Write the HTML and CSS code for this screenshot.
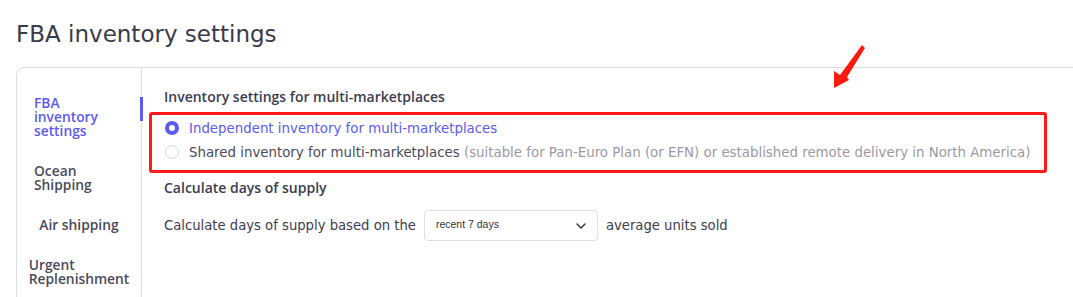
FILE: index.html
```html
<!DOCTYPE html>
<html>
<head>
<meta charset="utf-8">
<link rel="stylesheet" href="styles.css">
</head>
<body>
<h1 class="page-title">FBA inventory settings</h1>
<div class="card">
  <nav class="sidebar">
    <div class="nav-item active"><span>FBA inventory settings</span></div>
    <div class="nav-item"><span>Ocean Shipping</span></div>
    <div class="nav-item"><span>Air shipping</span></div>
    <div class="nav-item"><span>Urgent Replenishment</span></div>
  </nav>
  <main class="content">
    <h2 class="section-title">Inventory settings for multi-marketplaces</h2>
    <div class="radio-group">
      <label class="radio checked"><span class="radio-dot"></span><span class="radio-label">Independent inventory for multi-marketplaces</span></label>
      <label class="radio"><span class="radio-dot"></span><span class="radio-label">Shared inventory for multi-marketplaces <span class="muted">(suitable for Pan-Euro Plan (or EFN) or established remote delivery in North America)</span></span></label>
    </div>
    <h2 class="section-title second">Calculate days of supply</h2>
    <div class="supply-row">
      <span>Calculate days of supply based on the</span>
      <div class="select">
        <span class="select-value">recent 7 days</span>
        <svg class="chevron" width="10" height="6" viewBox="0 0 10 6"><path d="M1 1l4 4 4-4" fill="none" stroke="#333" stroke-width="1.4" stroke-linecap="round" stroke-linejoin="round"/></svg>
      </div>
      <span>average units sold</span>
    </div>
  </main>
</div>
<svg class="arrow" width="40" height="50" viewBox="830 42 40 50"><polygon points="862,45 865,48 847,77 849,80 834,88 834,71 840,75" fill="#ff1a10"/></svg>
</body>
</html>
```
FILE: styles.css
```css
html, body {
  margin: 0;
  padding: 0;
  background: #fff;
  overflow: hidden;
}
body {
  width: 1073px;
  height: 297px;
  font-family: "DejaVu Sans", "Liberation Sans", sans-serif;
  color: #3c3c4e;
  position: relative;
}
.page-title {
  margin: 0;
  padding: 19px 0 0 16px;
  height: 48px;
  box-sizing: border-box;
  font-size: 23px;
  font-weight: 400;
  line-height: 30px;
  color: #3a3a4c;
}
.card {
  margin: 19px 0 0 16px;
  width: 1080px;
  height: 240px;
  border: 1px solid #dcdce2;
  border-radius: 8px 0 0 0;
  display: flex;
  box-sizing: border-box;
}
.sidebar {
  width: 124px;
  flex: none;
  border-right: 1px solid #dcdce2;
  display: flex;
  flex-direction: column;
  padding-top: 28px;
}
.nav-item {
  position: relative;
  display: flex;
  justify-content: center;
  padding: 0 17px;
  font-family: "Open Sans", "DejaVu Sans", sans-serif;
  font-size: 13.8px;
  line-height: 14px;
  font-weight: 600;
  color: #4a4a5a;
}
.nav-item:nth-child(1) { height: 68px; }
.nav-item:nth-child(2) { height: 54px; }
.nav-item:nth-child(3) { height: 40px; }
.nav-item.active {
  color: #5b5bef;
}
.nav-item.active::after {
  content: "";
  position: absolute;
  right: -2px;
  top: 1px;
  width: 3px;
  height: 24px;
  background: #5b5bef;
}
.content {
  flex: 1;
  padding: 21px 0 0 22px;
}
.section-title {
  margin: 0;
  font-family: "Open Sans", "DejaVu Sans", sans-serif;
  font-size: 14px;
  font-weight: 600;
  line-height: 16px;
  color: #3c3c50;
}
.section-title.second {
  margin-top: 7px;
}
.radio-group {
  margin: 7px 0 0 -15px;
  width: 898px;
  height: 61px;
  box-sizing: border-box;
  border: 3px solid #ff1a1a;
  border-radius: 3px;
  padding: 1px 0 0 13px;
  display: flex;
  flex-direction: column;
}
.radio {
  display: flex;
  align-items: center;
  height: 24px;
  font-size: 13.35px;
  color: #4a4a5a;
}
.radio-dot {
  width: 14px;
  height: 14px;
  box-sizing: border-box;
  border: 1px solid #d6d6de;
  border-radius: 50%;
  margin-right: 10px;
  flex: none;
}
.radio.checked .radio-dot {
  border: 4px solid #5b5bef;
  background: #fff;
}
.radio.checked .radio-label {
  color: #5b5bef;
}
.muted {
  color: #9a9aa2;
}
.supply-row {
  margin-top: 14px;
  display: flex;
  align-items: center;
  gap: 8px;
  font-size: 13.2px;
  color: #3c3c4e;
}
.select {
  width: 174px;
  height: 31px;
  box-sizing: border-box;
  border: 1px solid #dcdfe6;
  border-radius: 4px;
  display: flex;
  align-items: center;
  justify-content: space-between;
  padding: 0 11px 0 11px;
}
.select-value {
  font-family: "Liberation Sans", sans-serif;
  font-size: 10.5px;
  color: #333;
  margin-top: -3px;
}
.arrow {
  position: absolute;
  left: 830px;
  top: 42px;
}
```
